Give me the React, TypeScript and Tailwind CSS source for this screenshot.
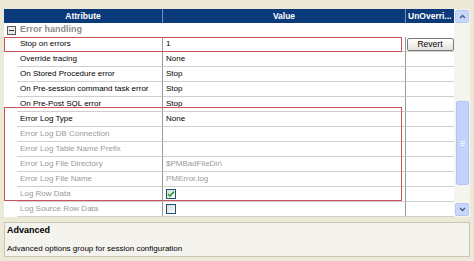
import React from 'react';

const rows = [
  { name: 'Stop on errors', value: '1', revert: true },
  { name: 'Override tracing', value: 'None' },
  { name: 'On Stored Procedure error', value: 'Stop' },
  { name: 'On Pre-session command task error', value: 'Stop' },
  { name: 'On Pre-Post SQL error', value: 'Stop' },
  { name: 'Error Log Type', value: 'None' },
  { name: 'Error Log DB Connection', value: '', dim: true },
  { name: 'Error Log Table Name Prefix', value: '', dim: true },
  { name: 'Error Log File Directory', value: '$PMBadFileDir\\', dim: true },
  { name: 'Error Log File Name', value: 'PMError.log', dim: true },
  { name: 'Log Row Data', check: true, checked: true, dim: true },
  { name: 'Log Source Row Data', check: true, checked: false, dim: true },
];

const Checkbox = ({ checked }: { checked?: boolean }) => (
  <div className="w-[10px] h-[10px] border border-[#1c5180] bg-gradient-to-br from-[#dcdcd5] to-[#fbfbf9] flex items-center justify-center">
    {checked && (
      <svg width="8" height="8" viewBox="0 0 8 8">
        <path d="M1 4 L3 6 L7 1.5" stroke="#21a121" strokeWidth="1.6" fill="none" />
      </svg>
    )}
  </div>
);

const App = () => {
  return (
    <div
      className="w-[474px] h-[261px] bg-[#ece9d8] pt-[9px] pl-[4px] pr-[4px] text-[8px] text-black overflow-hidden"
      style={{ fontFamily: '"Liberation Sans", Arial, sans-serif' }}
    >
      <div className="flex h-[208px]">
        {/* Grid */}
        <div className="relative w-[450px] bg-white">
          <div className="flex h-[14px] bg-[#0b3a7a] text-white font-bold text-[8.5px] leading-[14px]">
            <div className="w-[159px] text-center border-r border-[#6f8fbf]">Attribute</div>
            <div className="w-[243px] text-center border-r border-[#6f8fbf]">Value</div>
            <div className="w-[48px] pl-[2px] whitespace-nowrap overflow-hidden">UnOverri...</div>
          </div>

          {/* Category */}
          <div className="flex items-center h-[14px]">
            <div className="w-[13px] flex justify-center pl-[1px]">
              <div className="w-[9px] h-[9px] border border-[#5a5a5a] bg-[#e8e8e4] flex items-center justify-center">
                <div className="w-[5px] h-[1px] bg-[#333]" />
              </div>
            </div>
            <div className="pl-[3px] font-bold text-[#8c8c8c] text-[9px]">Error handling</div>
          </div>

          {rows.map((r) => (
            <div key={r.name} className="flex h-[15px] leading-[14px]">
              <div className="w-[13px]" />
              <div
                className={`w-[146px] pl-[3px] border-b border-[#cfcfcf] border-r border-r-[#9a9a9a] whitespace-nowrap ${
                  r.dim ? 'text-[#9a9a9a]' : ''
                }`}
              >
                {r.name}
              </div>
              <div
                className={`w-[243px] pl-[3px] border-b border-[#cfcfcf] border-r border-r-[#9a9a9a] flex items-center ${
                  r.dim ? 'text-[#9a9a9a]' : ''
                }`}
              >
                {r.check ? <Checkbox checked={r.checked} /> : r.value}
              </div>
              <div className="w-[48px] border-b border-[#cfcfcf] flex items-center justify-center">
                {r.revert && (
                  <div className="w-[47px] h-[13px] rounded-[2px] border border-[#7a7a7a] bg-gradient-to-b from-white to-[#e4e3dc] text-center leading-[11px] text-[8.5px]">
                    Revert
                  </div>
                )}
              </div>
            </div>
          ))}

          {/* highlight boxes */}
          <div className="absolute left-0 top-[28px] w-[398px] h-[15px] border border-[#c8545a]" />
          <div className="absolute left-0 top-[98px] w-[398px] h-[94px] border border-[#c8545a]" />
        </div>

        {/* Scrollbar */}
        <div className="w-[16px] bg-[#f5f4ef] flex flex-col items-center pt-[1px]">
          <div className="w-[14px] h-[13px] rounded-[2px] bg-[#c8d7fb] border border-[#b4c8f6] flex items-center justify-center">
            <svg width="7" height="5" viewBox="0 0 7 5">
              <path d="M1 4 L3.5 1.5 L6 4" stroke="#4d6185" strokeWidth="1.5" fill="none" />
            </svg>
          </div>
          <div className="h-[78px]" />
          <div className="w-[13px] h-[84px] rounded-[2px] bg-[#c3d3fb] border border-[#b0c5f5] flex items-center justify-center">
            <div className="flex flex-col gap-[1px]">
              <div className="w-[5px] h-[1px] bg-[#eef3ff]" />
              <div className="w-[5px] h-[1px] bg-[#eef3ff]" />
              <div className="w-[5px] h-[1px] bg-[#eef3ff]" />
            </div>
          </div>
          <div className="h-[18px]" />
          <div className="w-[14px] h-[13px] rounded-[2px] bg-[#c8d7fb] border border-[#b4c8f6] flex items-center justify-center">
            <svg width="7" height="5" viewBox="0 0 7 5">
              <path d="M1 1 L3.5 3.5 L6 1" stroke="#4d6185" strokeWidth="1.5" fill="none" />
            </svg>
          </div>
        </div>
      </div>

      {/* Description */}
      <div className="mt-[5px] h-[35px] w-[466px] border border-[#c9c6b6] bg-[#f4f3ee] pl-[2px]">
        <div className="font-bold text-[9px] leading-[12px] mt-[1px]">Advanced</div>
        <div className="text-[8px] leading-[10px] mt-[8px]">Advanced options group for session configuration</div>
      </div>
    </div>
  );
};

export default App;
